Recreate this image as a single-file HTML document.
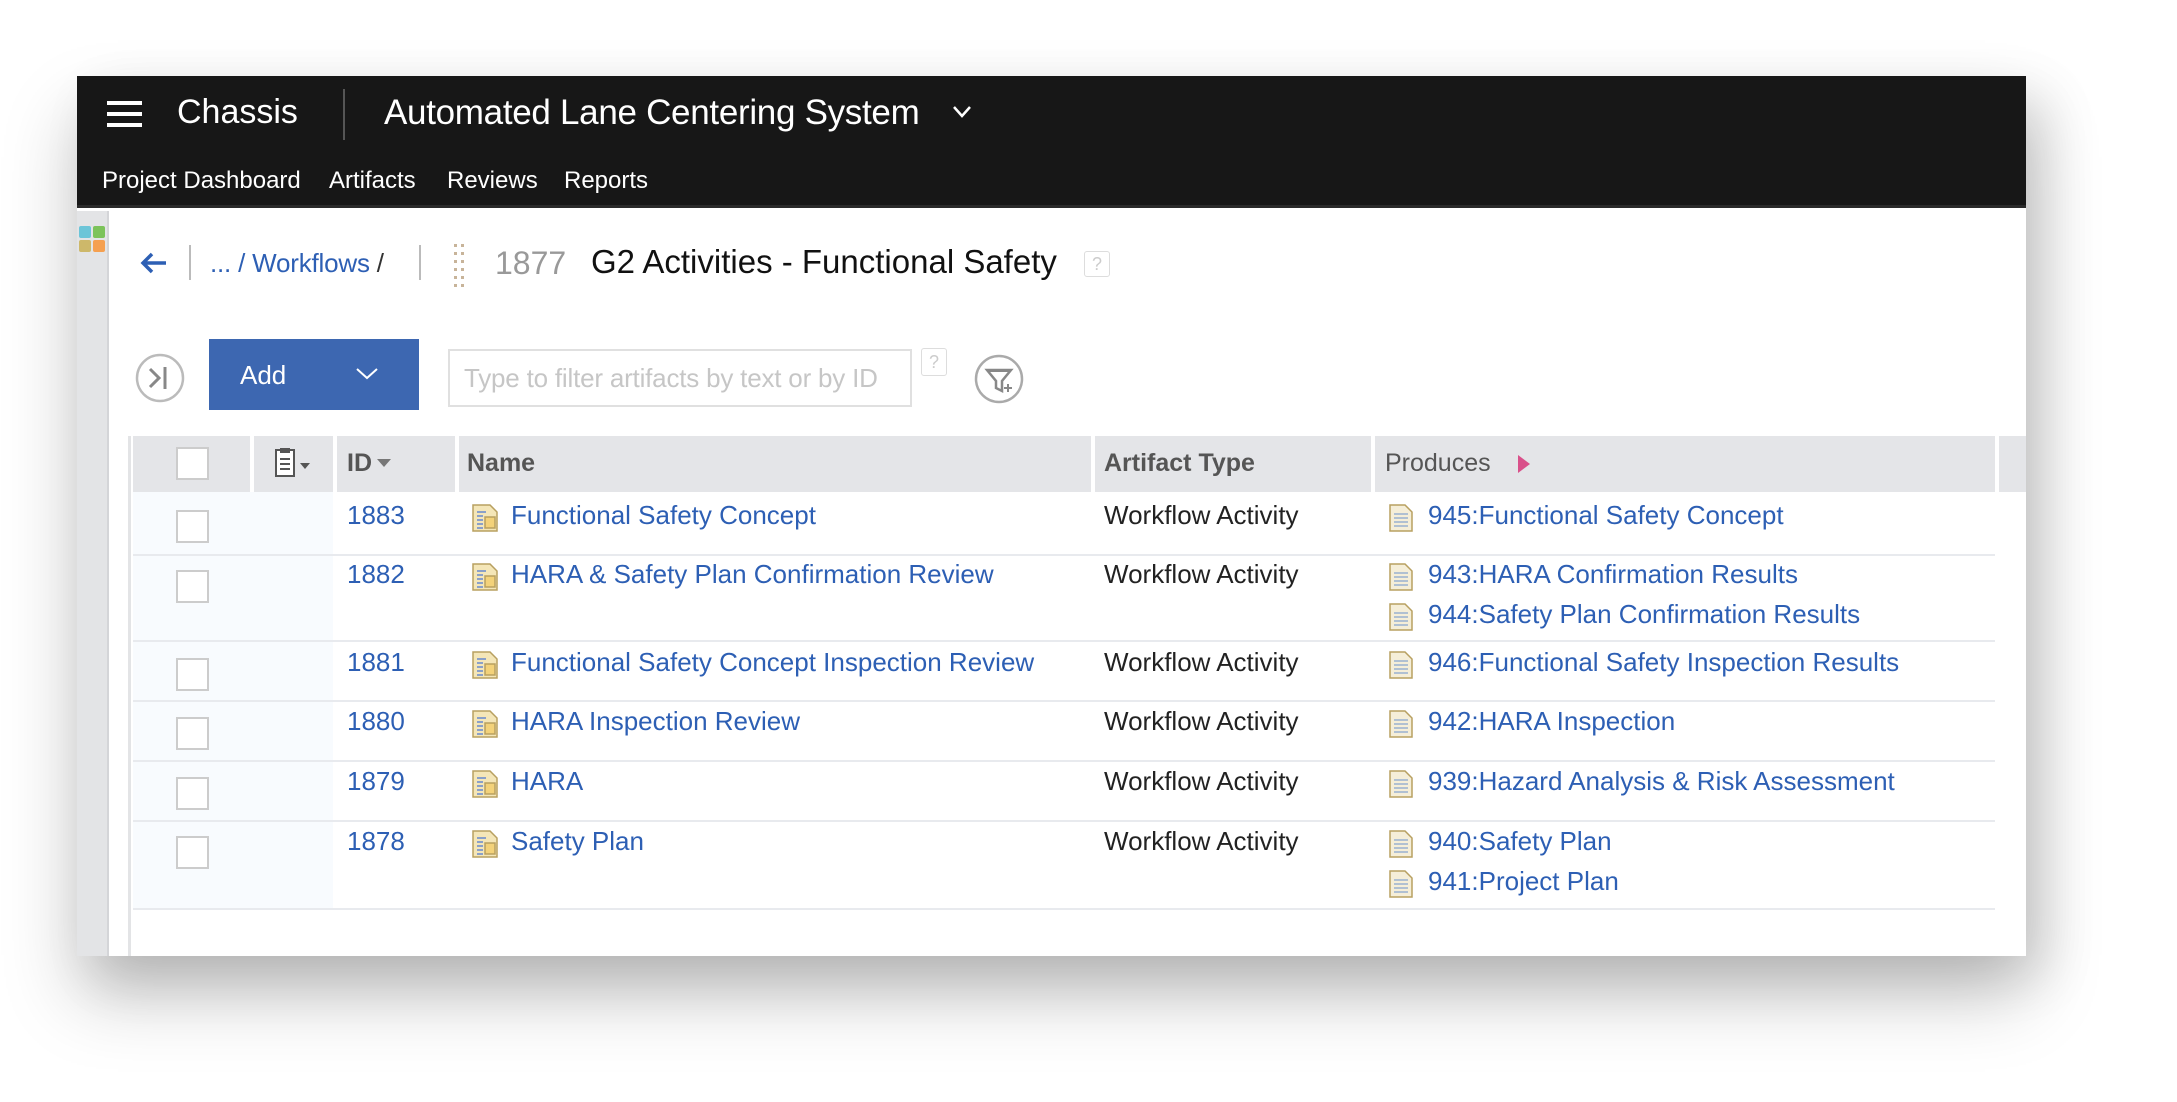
<!DOCTYPE html>
<html><head><meta charset="utf-8"><style>
*{margin:0;padding:0;box-sizing:border-box}
body{width:2177px;height:1102px;background:#fff;position:relative;overflow:hidden;font-family:"Liberation Sans",Arial,sans-serif}
.abs{position:absolute}
#panel{left:77px;top:76px;width:1949px;height:880px;background:#fff;box-shadow:0 40px 70px rgba(0,0,0,.22),20px 20px 50px rgba(0,0,0,.12)}
#hdr{left:77px;top:76px;width:1949px;height:132px;background:#171717;border-bottom:3px solid #2a2a2a}
.w{color:#fff}
.lnk{color:#2d5fb4}
.cell{position:absolute;font-size:26px;white-space:nowrap;line-height:28px}
.hd{position:absolute;font-size:25px;color:#555;font-weight:bold;line-height:28px;top:449px}
.cb{position:absolute;width:33px;height:33px;border:2px solid #ccc;background:#fff;left:176px}
.sep{position:absolute;height:2px;background:#e8eaee;left:133px;width:1862px}
</style></head><body>
<div id="panel" class="abs"></div>
<div id="hdr" class="abs"></div>
<div class="abs" style="left:107px;top:101px;width:35px;height:4px;background:#fff"></div>
<div class="abs" style="left:107px;top:112px;width:35px;height:4px;background:#fff"></div>
<div class="abs" style="left:107px;top:123px;width:35px;height:4px;background:#fff"></div>
<div class="abs w" style="left:177px;top:93px;font-size:34px">Chassis</div>
<div class="abs" style="left:343px;top:89px;width:2px;height:51px;background:#555"></div>
<div class="abs w" style="left:384px;top:93px;font-size:35px;letter-spacing:-0.3px">Automated Lane Centering System</div>
<svg class="abs" style="left:951px;top:104px" width="22" height="16"><path d="M3 3 L11 12 L19 3" stroke="#fff" stroke-width="2.5" fill="none"/></svg>
<div class="abs w" style="left:102px;top:167px;font-size:24px">Project Dashboard</div>
<div class="abs w" style="left:329px;top:167px;font-size:24px">Artifacts</div>
<div class="abs w" style="left:447px;top:167px;font-size:24px">Reviews</div>
<div class="abs w" style="left:564px;top:167px;font-size:24px">Reports</div>
<div class="abs" style="left:77px;top:211px;width:32px;height:745px;background:#e3e4e6;border-right:2px solid #d4d5d8"></div>
<div class="abs" style="left:79px;top:226px;width:12px;height:12px;background:#6cc5d8;border-radius:2px"></div>
<div class="abs" style="left:93px;top:226px;width:12px;height:12px;background:#7cc35a;border-radius:2px"></div>
<div class="abs" style="left:79px;top:240px;width:12px;height:12px;background:#cdb86a;border-radius:2px"></div>
<div class="abs" style="left:93px;top:240px;width:12px;height:12px;background:#f5a050;border-radius:2px"></div>
<svg class="abs" style="left:138px;top:250px" width="30" height="26"><path d="M28 13 H5 M14 4 L5 13 L14 22" stroke="#2d5fb4" stroke-width="3.5" fill="none"/></svg>
<div class="abs" style="left:189px;top:245px;width:2px;height:35px;background:#bbb"></div>
<div class="abs" style="left:210px;top:248px;font-size:26px;color:#2d5fb4;letter-spacing:-0.2px">... / Workflows <span style="color:#333">/</span></div>
<div class="abs" style="left:419px;top:245px;width:2px;height:35px;background:#bbb"></div>
<svg class="abs" style="left:453px;top:243px" width="14" height="48"><g fill="#c8b49a"><rect x="1" y="1" width="3" height="3"/><rect x="8" y="1" width="3" height="3"/><rect x="1" y="9" width="3" height="3"/><rect x="8" y="9" width="3" height="3"/><rect x="1" y="17" width="3" height="3"/><rect x="8" y="17" width="3" height="3"/><rect x="1" y="25" width="3" height="3"/><rect x="8" y="25" width="3" height="3"/><rect x="1" y="33" width="3" height="3"/><rect x="8" y="33" width="3" height="3"/><rect x="1" y="41" width="3" height="3"/><rect x="8" y="41" width="3" height="3"/></g></svg>
<div class="abs" style="left:495px;top:245px;font-size:32px;color:#999">1877</div>
<div class="abs" style="left:591px;top:243px;font-size:33px;color:#111">G2 Activities - Functional Safety</div>
<div class="abs" style="left:1084px;top:251px;width:26px;height:26px;border:1.5px solid #ddd;border-radius:3px;color:#ccc;font-size:18px;text-align:center;line-height:24px">?</div>
<svg class="abs" style="left:134px;top:352px" width="52" height="52"><circle cx="26" cy="26" r="23" stroke="#bbb" stroke-width="2.5" fill="none"/><path d="M16 17 L25 26 L16 35" stroke="#888" stroke-width="3" fill="none"/><path d="M31 15 V37" stroke="#888" stroke-width="3"/></svg>
<div class="abs" style="left:209px;top:339px;width:210px;height:71px;background:#3d67b1"></div>
<div class="abs w" style="left:240px;top:360px;font-size:26px">Add</div>
<svg class="abs" style="left:355px;top:366px" width="24" height="16"><path d="M2 3 L12 12 L22 3" stroke="#fff" stroke-width="2" fill="none"/></svg>
<div class="abs" style="left:448px;top:349px;width:464px;height:58px;border:2px solid #e0e0e0;background:#fff"></div>
<div class="abs" style="left:464px;top:363px;font-size:26px;color:#c6c6c6;letter-spacing:-0.2px">Type to filter artifacts by text or by ID</div>
<div class="abs" style="left:921px;top:348px;width:26px;height:28px;border:1.5px solid #ddd;border-radius:3px;color:#ccc;font-size:18px;text-align:center;line-height:26px">?</div>
<svg class="abs" style="left:972px;top:352px" width="54" height="54"><circle cx="27" cy="27" r="23" stroke="#aaa" stroke-width="2.5" fill="none"/><path d="M15 18 H39 L30 29 V39 L24 36 V29 Z" stroke="#888" stroke-width="2.5" fill="none"/><rect x="15" y="17" width="24" height="3" fill="#888"/><path d="M32 36 H40 M36 32 V40" stroke="#888" stroke-width="2"/></svg>
<div class="abs" style="left:128px;top:436px;width:3px;height:520px;background:#e3e4e6"></div>
<div class="abs" style="left:133px;top:436px;width:1893px;height:56px;background:#e4e5e8"></div>
<div class="abs" style="left:133px;top:492px;width:200px;height:418px;background:#f8fbfe"></div>
<div class="abs" style="left:250px;top:436px;width:4px;height:56px;background:#fff"></div>
<div class="abs" style="left:333px;top:436px;width:4px;height:56px;background:#fff"></div>
<div class="abs" style="left:455px;top:436px;width:4px;height:56px;background:#fff"></div>
<div class="abs" style="left:1091px;top:436px;width:4px;height:56px;background:#fff"></div>
<div class="abs" style="left:1371px;top:436px;width:4px;height:56px;background:#fff"></div>
<div class="abs" style="left:1995px;top:436px;width:4px;height:56px;background:#fff"></div>
<div class="cb" style="top:447px"></div>
<svg class="abs" style="left:274px;top:447px" width="46" height="34"><rect x="2" y="3" width="18" height="26" fill="#fff" stroke="#555" stroke-width="2"/><path d="M6 12 H16 M6 17 H16 M6 22 H16" stroke="#555" stroke-width="2"/><rect x="6" y="1" width="10" height="5" fill="#555"/><path d="M26 16 L36 16 L31 22 Z" fill="#555"/></svg>
<div class="hd" style="left:347px">ID</div>
<svg class="abs" style="left:376px;top:458px" width="16" height="10"><path d="M1 1 H15 L8 9 Z" fill="#777"/></svg>
<div class="hd" style="left:467px">Name</div>
<div class="hd" style="left:1104px">Artifact Type</div>
<div class="hd" style="left:1385px;font-weight:normal">Produces</div>
<svg class="abs" style="left:1517px;top:454px" width="14" height="20"><path d="M1 1 L13 10 L1 19 Z" fill="#d9508a"/></svg>

<div class="sep" style="top:554px"></div>
<div class="sep" style="top:640px"></div>
<div class="sep" style="top:700px"></div>
<div class="sep" style="top:760px"></div>
<div class="sep" style="top:820px"></div>
<div class="sep" style="top:908px"></div>

<svg width="0" height="0" style="position:absolute"><defs>
<symbol id="wa" viewBox="0 0 28 30"><path d="M2 2 H19 L26 9 V28 H2 Z" fill="#f4e6b8" stroke="#b8a060" stroke-width="1.5"/><path d="M6 9 H15 M6 13 H12 M6 17 H12 M6 21 H12 M6 25 H12" stroke="#8aa0c8" stroke-width="2"/><rect x="14" y="14" width="10" height="11" fill="#f3d27a" stroke="#b8a060" stroke-width="1.5"/></symbol>
<symbol id="doc" viewBox="0 0 26 30"><path d="M2 2 H17 L24 9 V28 H2 Z" fill="#f5eed8" stroke="#b8a060" stroke-width="1.5"/><path d="M6 11 H20 M6 15 H20 M6 19 H20 M6 23 H20" stroke="#9ab0d0" stroke-width="1.6"/></symbol>
</defs></svg>

<div class="cb" style="top:510px"></div>
<div class="cell lnk" style="left:347px;top:501px">1883</div>
<svg class="abs" style="left:471px;top:503px" width="28" height="30"><use href="#wa"/></svg>
<div class="cell lnk" style="left:511px;top:501px">Functional Safety Concept</div>
<div class="cell" style="left:1104px;top:501px;color:#222">Workflow Activity</div>
<svg class="abs" style="left:1388px;top:503px" width="26" height="30"><use href="#doc"/></svg>
<div class="cell lnk" style="left:1428px;top:501px">945:Functional Safety Concept</div>

<div class="cb" style="top:570px"></div>
<div class="cell lnk" style="left:347px;top:560px">1882</div>
<svg class="abs" style="left:471px;top:562px" width="28" height="30"><use href="#wa"/></svg>
<div class="cell lnk" style="left:511px;top:560px">HARA &amp; Safety Plan Confirmation Review</div>
<div class="cell" style="left:1104px;top:560px;color:#222">Workflow Activity</div>
<svg class="abs" style="left:1388px;top:562px" width="26" height="30"><use href="#doc"/></svg>
<div class="cell lnk" style="left:1428px;top:560px">943:HARA Confirmation Results</div>
<svg class="abs" style="left:1388px;top:602px" width="26" height="30"><use href="#doc"/></svg>
<div class="cell lnk" style="left:1428px;top:600px">944:Safety Plan Confirmation Results</div>

<div class="cb" style="top:658px"></div>
<div class="cell lnk" style="left:347px;top:648px">1881</div>
<svg class="abs" style="left:471px;top:650px" width="28" height="30"><use href="#wa"/></svg>
<div class="cell lnk" style="left:511px;top:648px">Functional Safety Concept Inspection Review</div>
<div class="cell" style="left:1104px;top:648px;color:#222">Workflow Activity</div>
<svg class="abs" style="left:1388px;top:650px" width="26" height="30"><use href="#doc"/></svg>
<div class="cell lnk" style="left:1428px;top:648px">946:Functional Safety Inspection Results</div>

<div class="cb" style="top:717px"></div>
<div class="cell lnk" style="left:347px;top:707px">1880</div>
<svg class="abs" style="left:471px;top:709px" width="28" height="30"><use href="#wa"/></svg>
<div class="cell lnk" style="left:511px;top:707px">HARA Inspection Review</div>
<div class="cell" style="left:1104px;top:707px;color:#222">Workflow Activity</div>
<svg class="abs" style="left:1388px;top:709px" width="26" height="30"><use href="#doc"/></svg>
<div class="cell lnk" style="left:1428px;top:707px">942:HARA Inspection</div>

<div class="cb" style="top:777px"></div>
<div class="cell lnk" style="left:347px;top:767px">1879</div>
<svg class="abs" style="left:471px;top:769px" width="28" height="30"><use href="#wa"/></svg>
<div class="cell lnk" style="left:511px;top:767px">HARA</div>
<div class="cell" style="left:1104px;top:767px;color:#222">Workflow Activity</div>
<svg class="abs" style="left:1388px;top:769px" width="26" height="30"><use href="#doc"/></svg>
<div class="cell lnk" style="left:1428px;top:767px">939:Hazard Analysis &amp; Risk Assessment</div>

<div class="cb" style="top:836px"></div>
<div class="cell lnk" style="left:347px;top:827px">1878</div>
<svg class="abs" style="left:471px;top:829px" width="28" height="30"><use href="#wa"/></svg>
<div class="cell lnk" style="left:511px;top:827px">Safety Plan</div>
<div class="cell" style="left:1104px;top:827px;color:#222">Workflow Activity</div>
<svg class="abs" style="left:1388px;top:829px" width="26" height="30"><use href="#doc"/></svg>
<div class="cell lnk" style="left:1428px;top:827px">940:Safety Plan</div>
<svg class="abs" style="left:1388px;top:869px" width="26" height="30"><use href="#doc"/></svg>
<div class="cell lnk" style="left:1428px;top:867px">941:Project Plan</div>
</body></html>
